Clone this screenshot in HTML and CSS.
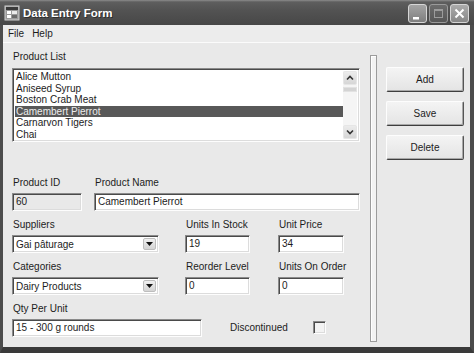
FILE: index.html
```html
<!DOCTYPE html>
<html lang="en">
<head>
    <meta charset="UTF-8">
    <title>Data Entry Form</title>
    <link rel="stylesheet" href="styles.css">
</head>
<body>
    <div class="window">
        <!-- Title bar -->
        <div class="titlebar">
            <svg class="title-icon" viewBox="0 0 16 16" width="16" height="16">
                <rect x="1" y="1" width="14" height="14" fill="#9a9a9a" stroke="#d0d0d0" stroke-width="1"/>
                <rect x="2" y="2" width="12" height="3" fill="#3a3a3a"/>
                <rect x="3" y="6" width="4" height="3" fill="#fff"/>
                <rect x="8" y="6" width="5" height="3" fill="#eaeaea"/>
                <rect x="3" y="10" width="4" height="3" fill="#fff"/>
                <rect x="8" y="10" width="5" height="3" fill="#6a6a6a"/>
            </svg>
            <span class="title-text">Data Entry Form</span>
            <div class="caption-btns">
                <div class="cap-btn cap-min">
                    <svg viewBox="0 0 17 17" width="17" height="17"><rect x="4" y="12" width="6" height="2.5" fill="#fff"/></svg>
                </div>
                <div class="cap-btn cap-max">
                    <svg viewBox="0 0 17 17" width="17" height="17"><rect x="4.5" y="4.5" width="8" height="8" fill="none" stroke="#9c9c9c" stroke-width="1"/><rect x="4" y="4" width="9" height="2" fill="#9c9c9c"/></svg>
                </div>
                <div class="cap-btn cap-close">
                    <svg viewBox="0 0 17 17" width="17" height="17"><path d="M4.5 4.5 L12.5 12.5 M12.5 4.5 L4.5 12.5" stroke="#fff" stroke-width="2" fill="none"/></svg>
                </div>
            </div>
        </div>

        <div class="frame">
            <!-- Menu -->
            <div class="menubar">
                <span class="menu-item">File</span>
                <span class="menu-item">Help</span>
            </div>

            <div class="client">
                <div class="main-col">
                    <div class="label">Product List</div>
                    <div class="listbox sunken">
                        <div class="list-items">
                            <div class="list-item">Alice Mutton</div>
                            <div class="list-item">Aniseed Syrup</div>
                            <div class="list-item">Boston Crab Meat</div>
                            <div class="list-item selected">Camembert Pierrot</div>
                            <div class="list-item">Carnarvon Tigers</div>
                            <div class="list-item">Chai</div>
                        </div>
                        <div class="scrollbar">
                            <div class="scroll-btn">
                                <svg viewBox="0 0 12 12" width="12" height="12"><path d="M3 7.5 L6 4.5 L9 7.5" stroke="#333" stroke-width="1.6" fill="none"/></svg>
                            </div>
                            <div class="scroll-track"><div class="scroll-thumb"></div></div>
                            <div class="scroll-btn">
                                <svg viewBox="0 0 12 12" width="12" height="12"><path d="M3 4.5 L6 7.5 L9 4.5" stroke="#333" stroke-width="1.6" fill="none"/></svg>
                            </div>
                        </div>
                    </div>

                    <div class="fields">
                        <div class="field-row">
                            <div class="field w-id">
                                <div class="label">Product ID</div>
                                <div class="textbox sunken disabled">60</div>
                            </div>
                            <div class="field w-name">
                                <div class="label">Product Name</div>
                                <div class="textbox sunken">Camembert Pierrot</div>
                            </div>
                        </div>

                        <div class="field-row">
                            <div class="field w-combo">
                                <div class="label">Suppliers</div>
                                <div class="combo sunken">
                                    <span class="combo-text">Gai pâturage</span>
                                    <span class="combo-btn"><svg viewBox="0 0 7 4" width="7" height="4"><path d="M0 0 H7 L3.5 4 Z" fill="#111"/></svg></span>
                                </div>
                            </div>
                            <div class="field w-stock">
                                <div class="label">Units In Stock</div>
                                <div class="textbox sunken">19</div>
                            </div>
                            <div class="field w-price">
                                <div class="label">Unit Price</div>
                                <div class="textbox sunken">34</div>
                            </div>
                        </div>

                        <div class="field-row">
                            <div class="field w-combo">
                                <div class="label">Categories</div>
                                <div class="combo sunken">
                                    <span class="combo-text">Dairy Products</span>
                                    <span class="combo-btn"><svg viewBox="0 0 7 4" width="7" height="4"><path d="M0 0 H7 L3.5 4 Z" fill="#111"/></svg></span>
                                </div>
                            </div>
                            <div class="field w-stock">
                                <div class="label">Reorder Level</div>
                                <div class="textbox sunken">0</div>
                            </div>
                            <div class="field w-price">
                                <div class="label">Units On Order</div>
                                <div class="textbox sunken">0</div>
                            </div>
                        </div>

                        <div class="field-row">
                            <div class="field w-qty">
                                <div class="label">Qty Per Unit</div>
                                <div class="textbox sunken">15 - 300 g rounds</div>
                            </div>
                            <div class="discontinued">
                                <span>Discontinued</span>
                                <span class="checkbox sunken"></span>
                            </div>
                        </div>
                    </div>
                </div>

                <div class="separator"></div>

                <div class="button-col">
                    <div class="btn">Add</div>
                    <div class="btn">Save</div>
                    <div class="btn">Delete</div>
                </div>
            </div>
        </div>
    </div>
</body>
</html>
```

FILE: styles.css
```css
* {
    box-sizing: border-box;
}
html, body {
    margin: 0;
    padding: 0;
}
body {
    width: 474px;
    height: 353px;
    overflow: hidden;
    font-family: "Liberation Sans", Arial, sans-serif;
    font-size: 10px;
    color: #1c1c1c;
    background: #444;
}
.window {
    width: 474px;
    height: 353px;
    display: flex;
    flex-direction: column;
    background: #4a4a4a;
}

/* title bar */
.titlebar {
    height: 25px;
    flex: none;
    display: flex;
    align-items: center;
    padding: 1px 5px 0 4px;
    background: linear-gradient(#8c8c8c 0, #5e5e5e 2px, #535353 40%, #474747 100%);
}
.title-icon {
    flex: none;
}
.title-text {
    flex: 1;
    margin-left: 3px;
    color: #fff;
    font-weight: bold;
    font-size: 11.5px;
    text-shadow: 1px 1px 0 #2e2e2e;
}
.caption-btns {
    display: flex;
    gap: 2px;
}
.cap-btn {
    width: 19px;
    height: 19px;
    border: 1px solid #d6d6d6;
    border-radius: 3px;
    display: flex;
    align-items: center;
    justify-content: center;
}
.cap-min {
    background: linear-gradient(#a4a4a4, #7e7e7e);
}
.cap-max {
    background: linear-gradient(#6c6c6c, #575757);
    border-color: #9a9a9a;
}
.cap-close {
    background: linear-gradient(#ababab, #888);
}

/* frame + menu */
.frame {
    flex: 1;
    display: flex;
    flex-direction: column;
    border-left: 3px solid #4c4c4c;
    border-right: 4px solid #4c4c4c;
    border-bottom: 6px solid #3a3a3a;
}
.menubar {
    height: 18px;
    flex: none;
    display: flex;
    align-items: center;
    padding-left: 1px;
    background: #ececec;
    border-bottom: 1px solid #fbfbfb;
}
.menu-item {
    padding: 0 4px;
}

/* client area */
.client {
    flex: 1;
    display: flex;
    background: #e9e9e9;
    padding-left: 9px;
}
.main-col {
    width: 348px;
    padding-top: 8px;
}
.label {
    line-height: 12px;
    height: 12px;
    padding-left: 1px;
    white-space: nowrap;
}
.sunken {
    border: 1px solid;
    border-color: #8a8a8a #fdfdfd #fdfdfd #8a8a8a;
    box-shadow: inset 1px 1px 0 #4a4a4a, inset -1px -1px 0 #dcdcdc;
}

/* listbox */
.listbox {
    margin-top: 5px;
    height: 74px;
    display: flex;
    background: #fff;
    padding: 2px 2px 2px 2px;
}
.list-items {
    flex: 1;
}
.list-item {
    height: 11.5px;
    line-height: 11.5px;
    padding-left: 1px;
    white-space: nowrap;
}
.list-item.selected {
    background: #585858;
    color: #ececec;
}
.scrollbar {
    width: 14px;
    display: flex;
    flex-direction: column;
    background: #f5f5f5;
}
.scroll-btn {
    height: 14px;
    background: linear-gradient(#ececec, #d6d6d6);
    border: 1px solid #e6e6e6;
    border-radius: 2px;
    display: flex;
    align-items: center;
    justify-content: center;
}
.scroll-track {
    flex: 1;
    padding-top: 2px;
}
.scroll-thumb {
    height: 5px;
    background: #d4d4d4;
    border: 1px solid #e2e2e2;
}

/* fields */
.fields {
    margin-top: 35px;
}
.field-row {
    display: flex;
    align-items: flex-end;
    margin-bottom: 8px;
}
.field .label {
    margin-bottom: 4px;
}
.textbox {
    height: 18px;
    line-height: 15px;
    padding-left: 3px;
    background: #fff;
    white-space: nowrap;
    overflow: hidden;
}
.textbox.disabled {
    background: #e9e9e9;
}
.w-id { width: 70px; }
.w-name { width: 266px; margin-left: 12px; }
.w-combo { width: 147px; }
.w-stock { width: 65px; margin-left: 26px; }
.w-price { width: 66px; margin-left: 28px; }
.w-qty { width: 190px; }

.combo {
    height: 18px;
    display: flex;
    align-items: stretch;
    background: #fff;
    padding: 2px 2px 2px 3px;
}
.combo-text {
    flex: 1;
    line-height: 13px;
}
.combo-btn {
    width: 13px;
    display: flex;
    align-items: center;
    justify-content: center;
    background: linear-gradient(#f0f0f0, #d4d4d4);
    border: 1px solid #bdbdbd;
    border-radius: 2px;
}

.discontinued {
    display: flex;
    align-items: center;
    margin-left: 28px;
    height: 18px;
    margin-bottom: 1px;
}
.checkbox {
    display: block;
    width: 13px;
    height: 13px;
    margin-left: 25px;
    background: #f3f3f3;
}

/* groove + buttons */
.separator {
    width: 7px;
    height: 287px;
    margin: 12px 0 0 10px;
    border: 1px solid #9c9c9c;
    background: #f3f3f3;
    box-shadow: inset 1px 1px 0 #fff;
}
.button-col {
    width: 78px;
    margin: 24px 0 0 9px;
    display: flex;
    flex-direction: column;
    gap: 9px;
}
.btn {
    height: 25px;
    display: flex;
    align-items: center;
    justify-content: center;
    background: linear-gradient(#f4f4f4, #e4e4e4);
    border: 1px solid;
    border-color: #fdfdfd #555 #3e3e3e #fdfdfd;
    box-shadow: inset -1px -1px 0 #a8a8a8;
    border-radius: 2px;
}
```
